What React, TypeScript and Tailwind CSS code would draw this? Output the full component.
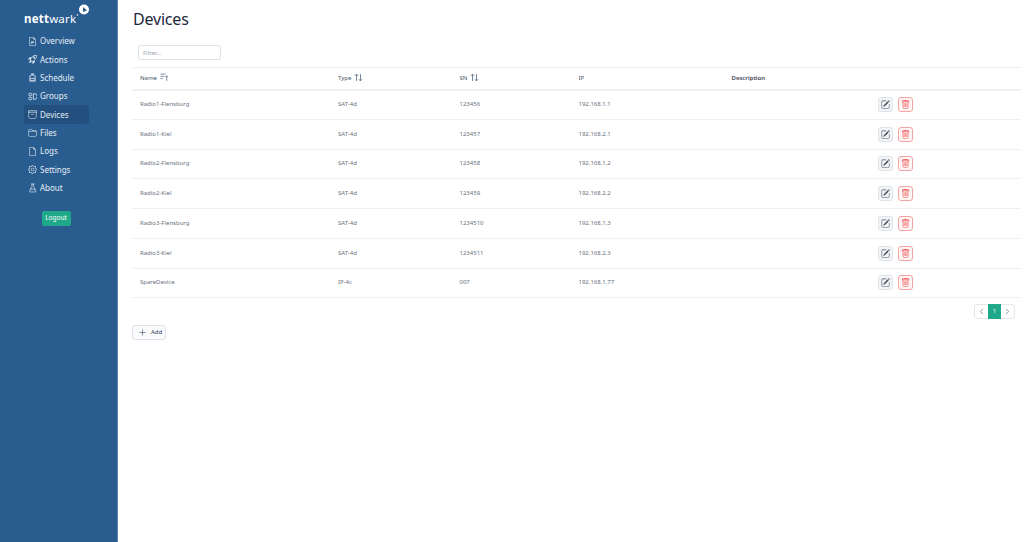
import { BsArchive, BsBackpack, BsFileEarmark, BsFileEarmarkText, BsFolder2Open, BsGear, BsPencilSquare, BsRocketTakeoff, BsTrash } from 'react-icons/bs';
import { ChevronLeft, ChevronRight, FlaskConical, Plus } from 'lucide-react';

const navItems = [
  { label: 'Overview', icon: <BsFileEarmarkText /> },
  { label: 'Actions', icon: <BsRocketTakeoff /> },
  { label: 'Schedule', icon: <BsBackpack /> },
  { label: 'Groups', icon: <GroupsIcon /> },
  { label: 'Devices', icon: <BsArchive />, active: true },
  { label: 'Files', icon: <BsFolder2Open /> },
  { label: 'Logs', icon: <BsFileEarmark /> },
  { label: 'Settings', icon: <BsGear /> },
  { label: 'About', icon: <FlaskConical size={10} strokeWidth={1.6} /> },
];

const devices = [
  { name: 'Radio1-Flensburg', type: 'SAT-4d', sn: '123456', ip: '192.168.1.1' },
  { name: 'Radio1-Kiel', type: 'SAT-4d', sn: '123457', ip: '192.168.2.1' },
  { name: 'Radio2-Flensburg', type: 'SAT-4d', sn: '123458', ip: '192.168.1.2' },
  { name: 'Radio2-Kiel', type: 'SAT-4d', sn: '123459', ip: '192.168.2.2' },
  { name: 'Radio3-Flensburg', type: 'SAT-4d', sn: '1234510', ip: '192.168.1.3' },
  { name: 'Radio3-Kiel', type: 'SAT-4d', sn: '1234511', ip: '192.168.2.3' },
  { name: 'SpareDevice', type: 'IP-4c', sn: '007', ip: '192.168.1.77' },
];

function GroupsIcon() {
  return (
    <svg width="9" height="9" viewBox="0 0 16 16" fill="none" stroke="currentColor" strokeWidth="1.5">
      <circle cx="4" cy="4.5" r="2.5" />
      <circle cx="4" cy="11.5" r="2.5" />
      <path d="M9.5 3h2a4 4 0 0 1 0 10h-2z" />
    </svg>
  );
}

function SortIcon({ active }: { active?: boolean }) {
  if (active) {
    return (
      <svg width="9" height="9" viewBox="0 0 16 16" fill="none" stroke="#64748b" strokeWidth="1.4" className="ml-[3px] mb-[2px]">
        <path d="M1 2h9M1 6h7M1 10h4" />
        <path d="M12 14V5M9.5 7.5 12 5l2.5 2.5" />
      </svg>
    );
  }
  return (
    <svg width="9" height="9" viewBox="0 0 16 16" fill="none" stroke="#64748b" strokeWidth="1.6" className="ml-[3px] mb-[2px]">
      <path d="M4.5 14V2M1.5 5l3-3 3 3" />
      <path d="M11.5 2v12M8.5 11l3 3 3-3" />
    </svg>
  );
}

function Sidebar() {
  return (
    <aside className="w-[118px] shrink-0 min-h-[542px] bg-[#2a5d8f] border-r border-[#5d86b0] text-[#e4ecf4]">
      <div className="relative h-[32px] pl-[24px] pt-[12px]">
        <span className="block text-[11.5px] leading-[14px] tracking-[0.2px] text-white">
          <b className="font-bold">nett</b>wark
        </span>
        <svg width="14" height="14" viewBox="0 0 14 14" className="absolute left-[76px] top-[3px]">
          <circle cx="8" cy="6.5" r="5" fill="white" />
          <path d="M7 4 11 7.5 7 9z" fill="#2a5d8f" />
          <circle cx="1.5" cy="12" r="0.8" fill="white" />
        </svg>
      </div>
      <nav className="flex flex-col pl-[24px] pr-[28px]">
        {navItems.map((item) => (
          <div
            key={item.label}
            className={`flex items-center h-[18.35px] pl-[4px] gap-[2.5px] rounded-[3px] text-[8px] ${item.active ? 'bg-[#224f7d]' : ''}`}
          >
            <span className="flex justify-center w-[9.5px] text-[9px]">{item.icon}</span>
            <span>{item.label}</span>
          </div>
        ))}
      </nav>
      <div className="flex justify-center mt-[14px] pr-[5px]">
        <button className="h-[14.5px] w-[29px] rounded-[2px] bg-[#1fa98a] text-[6.5px] text-white">Logout</button>
      </div>
    </aside>
  );
}

function DevicesTable() {
  return (
    <table className="w-[889px] table-fixed border-collapse text-[6px] text-[#6b7280]">
      <colgroup>
        <col className="w-[198px]" />
        <col className="w-[121.5px]" />
        <col className="w-[119px]" />
        <col className="w-[153px]" />
        <col className="w-[147px]" />
        <col />
      </colgroup>
      <thead>
        <tr className="h-[22.5px] border-t border-b-2 border-t-[#eef1f4] border-b-[#eef1f4] text-[#4b5563]">
          <th className="pl-[8px] text-left font-normal"><span className="flex items-center">Name <SortIcon active /></span></th>
          <th className="pl-[8px] text-left font-normal"><span className="flex items-center">Type <SortIcon /></span></th>
          <th className="pl-[8px] text-left font-normal"><span className="flex items-center">SN <SortIcon /></span></th>
          <th className="pl-[8px] text-left font-normal">IP</th>
          <th className="pl-[8px] text-left font-semibold text-[#374151]">Description</th>
          <th />
        </tr>
      </thead>
      <tbody>
        {devices.map((d) => (
          <tr key={d.name} className="h-[29.75px] border-b border-[#eef1f4]">
            <td className="pl-[8px]">{d.name}</td>
            <td className="pl-[8px]">{d.type}</td>
            <td className="pl-[8px]">{d.sn}</td>
            <td className="pl-[8px]">{d.ip}</td>
            <td />
            <td>
              <div className="flex gap-[5px] pl-[7px]">
                <button className="flex items-center justify-center w-[15px] h-[15px] rounded-[3px] border border-[#dfe4ea] bg-[#f3f5f7] text-[#4b5563] text-[9px]">
                  <BsPencilSquare />
                </button>
                <button className="flex items-center justify-center w-[15px] h-[15px] rounded-[3px] border border-[#f5a3a3] bg-[#fff5f5] text-[#ef4444] text-[9px]">
                  <BsTrash />
                </button>
              </div>
            </td>
          </tr>
        ))}
      </tbody>
    </table>
  );
}

export default function App() {
  return (
    <div className="flex min-h-[542px] bg-white font-['Noto_Sans','Open_Sans',sans-serif]">
      <Sidebar />
      <main className="flex-1 pl-[14px] pr-[3px]">
        <h1 className="h-[45px] pt-[7px] pl-[1px] text-[16px] leading-[24px] tracking-[-0.2px] text-[#1e293b]">Devices</h1>
        <div className="pl-[6px] h-[21.5px]">
          <input
            placeholder="Filter..."
            className="block w-[83px] h-[15px] px-[4px] rounded-[2px] border border-[#dfe3e8] text-[6px] placeholder:text-[#9ca3af]"
          />
        </div>
        <DevicesTable />
        <div className="flex justify-end mt-[6px] pr-[6px]">
          <div className="flex items-center h-[15px] rounded-[3px] border border-[#e5e7eb] text-[#64748b]">
            <span className="flex justify-center w-[13px]"><ChevronLeft size={9} /></span>
            <span className="flex items-center justify-center w-[13px] h-[15px] bg-[#1fa98a] text-[6px] text-white">1</span>
            <span className="flex justify-center w-[13px]"><ChevronRight size={9} /></span>
          </div>
        </div>
        <button className="flex items-center gap-[4px] mt-[6px] h-[15px] w-[34px] pl-[5px] rounded-[3px] border border-[#dfe4ea] bg-[#f8fafc] text-[6px] text-[#334155]">
          <Plus size={9} strokeWidth={1.5} /> Add
        </button>
      </main>
    </div>
  );
}
